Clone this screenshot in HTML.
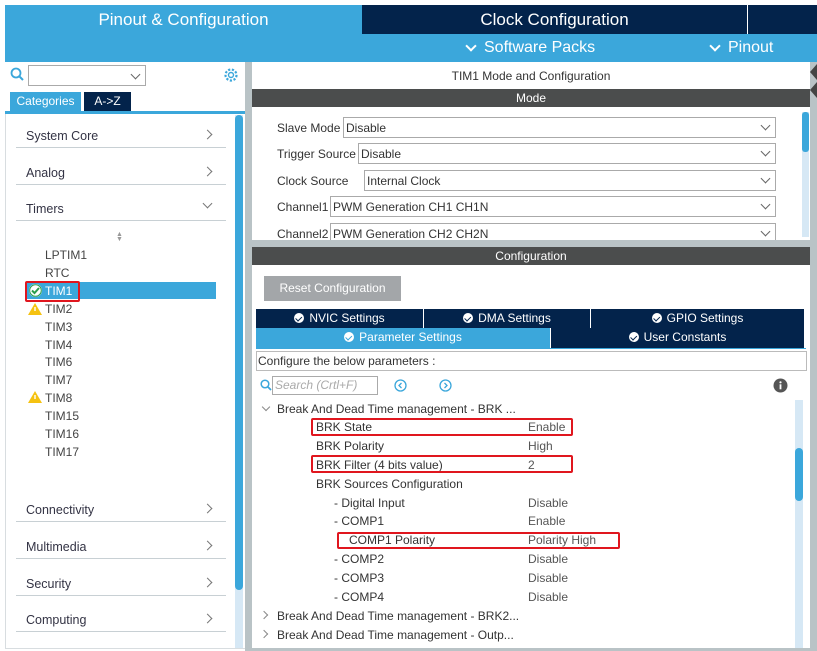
<!DOCTYPE html>
<html><head><meta charset="utf-8"><style>
*{margin:0;padding:0;box-sizing:border-box}
body{width:817px;height:651px;overflow:hidden;background:#fff;font-family:"Liberation Sans",sans-serif;position:relative}
.a{position:absolute}
.t{font-size:12px;color:#333;white-space:nowrap}
.dark{background:#03234b;color:#fff}
.blue{background:#3ba7db;color:#fff}
.sel{border:1px solid #aaa;background:#fff;font-size:12px;color:#333;padding-left:2px;line-height:17px}
.chev{position:absolute;right:6px;top:4px;width:7px;height:7px;border-right:1px solid #666;border-bottom:1px solid #666;transform:rotate(45deg)}
.cat{position:absolute;left:26px;font-size:12.5px;color:#334}
.line{position:absolute;left:16px;width:210px;height:1px;background:#c8d0d4}
.ra{position:absolute;left:204px;width:7px;height:7px;border-right:1px solid #777;border-top:1px solid #777;transform:rotate(45deg)}
.tab{position:absolute;font-size:12px;text-align:center;line-height:19px}
.ck{display:inline-block;width:10px;height:10px;border-radius:50%;background:#fff;vertical-align:-1px;margin-right:5px;position:relative}
.ck:after{content:"";position:absolute;left:3px;top:1.5px;width:2.5px;height:4.5px;border-right:1.5px solid #03234b;border-bottom:1.5px solid #03234b;transform:rotate(45deg)}
.blue .ck:after{border-color:#3ba7db}
.red{position:absolute;border:2px solid #e0161e;border-radius:2px}
.tm{position:absolute;left:45px;font-size:12px;color:#444}
.v{position:absolute;left:528px;font-size:12px;color:#555}
.hc{position:absolute;width:8px;height:8px;border-right:2px solid #fff;border-bottom:2px solid #fff;transform:rotate(45deg)}
.tc{position:absolute;width:6px;height:6px;border-right:1px solid #888;border-bottom:1px solid #888}
</style></head><body>
<div class="a blue" style="left:5px;top:5px;width:357px;height:30px;font-size:17px;text-align:center;line-height:30px">Pinout &amp; Configuration</div>
<div class="a dark" style="left:362px;top:5px;width:385px;height:30px;font-size:17px;text-align:center;line-height:30px">Clock Configuration</div>
<div class="a dark" style="left:748px;top:5px;width:69px;height:30px"></div>
<div class="a blue" style="left:5px;top:34px;width:812px;height:28px;font-size:16px;line-height:28px">
<div class="hc" style="left:462px;top:8px"></div><span class="a" style="left:479px">Software Packs</span>
<div class="hc" style="left:706px;top:8px"></div><span class="a" style="left:723px">Pinout</span></div>
<div class="a" style="left:245px;top:62px;width:7px;height:589px;background:#b9c3c6"></div>
<svg class="a" style="left:10px;top:67px" width="16" height="16"><circle cx="6" cy="6" r="4.5" fill="none" stroke="#3ba7db" stroke-width="1.8"/><line x1="9.5" y1="9.5" x2="13" y2="13" stroke="#3ba7db" stroke-width="2"/></svg>
<div class="a sel" style="left:28px;top:65px;width:118px;height:21px"><div class="chev" style="top:5px"></div></div>
<svg class="a" style="left:223px;top:67px" width="16" height="16"><circle cx="8" cy="8" r="5.5" fill="none" stroke="#3ba7db" stroke-width="2.2" stroke-dasharray="2.2 1.6"/><circle cx="8" cy="8" r="2.5" fill="none" stroke="#3ba7db" stroke-width="1.4"/></svg>
<div class="a blue" style="left:10px;top:92px;width:71px;height:19px;font-size:12px;text-align:center;line-height:19px">Categories</div>
<div class="a dark" style="left:84px;top:92px;width:47px;height:19px;font-size:12px;text-align:center;line-height:19px">A-&gt;Z</div>
<div class="a" style="left:5px;top:111px;width:240px;height:3px;background:#3ba7db"></div>
<div class="a" style="left:5px;top:114px;width:1px;height:535px;background:#d8dde0"></div>
<div class="a" style="left:5px;top:648px;width:240px;height:1px;background:#d8dde0"></div>
<div class="a" style="left:235px;top:115px;width:8px;height:533px;background:#d6e8f5"></div>
<div class="a" style="left:235px;top:115px;width:8px;height:475px;background:#3ba7db;border-radius:4px"></div>
<div class="cat" style="top:129px">System Core</div><div class="ra" style="top:131px"></div><div class="line" style="top:147px"></div>
<div class="cat" style="top:166px">Analog</div><div class="ra" style="top:168px"></div><div class="line" style="top:184px"></div>
<div class="cat" style="top:202px">Timers</div><div class="ra" style="top:200px;transform:rotate(135deg)"></div><div class="line" style="top:220px"></div>
<div class="a" style="left:116px;top:232px;font-size:7px;color:#999;line-height:5px">▲<br>▼</div>
<div class="tm" style="top:248px">LPTIM1</div>
<div class="tm" style="top:266px">RTC</div>
<div class="a" style="left:27px;top:282px;width:189px;height:17px;background:#3ba7db"></div>
<div class="tm" style="top:284px;color:#fff">TIM1</div>
<svg class="a" style="left:28px;top:283px" width="15" height="15"><circle cx="7.5" cy="7.5" r="6.5" fill="#fff"/><circle cx="7.5" cy="7.5" r="5.8" fill="#fff" stroke="#2a9d4a" stroke-width="1"/><path d="M4 7.5l2.5 2.5 4.5-5" fill="none" stroke="#2a9d4a" stroke-width="2"/></svg>
<div class="red" style="left:25px;top:281px;width:55px;height:21px"></div>
<svg class="a" style="left:28px;top:303px" width="14" height="12"><path d="M7 0L14 12H0z" fill="#f5c211"/><rect x="6.3" y="4" width="1.4" height="4" fill="#fff"/></svg>
<div class="tm" style="top:302px">TIM2</div>
<div class="tm" style="top:320px">TIM3</div>
<div class="tm" style="top:338px">TIM4</div>
<div class="tm" style="top:355px">TIM6</div>
<div class="tm" style="top:373px">TIM7</div>
<svg class="a" style="left:28px;top:391px" width="14" height="12"><path d="M7 0L14 12H0z" fill="#f5c211"/><rect x="6.3" y="4" width="1.4" height="4" fill="#fff"/></svg>
<div class="tm" style="top:391px">TIM8</div>
<div class="tm" style="top:409px">TIM15</div>
<div class="tm" style="top:427px">TIM16</div>
<div class="tm" style="top:445px">TIM17</div>
<div class="cat" style="top:503px">Connectivity</div><div class="ra" style="top:505px"></div><div class="line" style="top:521px"></div>
<div class="cat" style="top:540px">Multimedia</div><div class="ra" style="top:542px"></div><div class="line" style="top:558px"></div>
<div class="cat" style="top:577px">Security</div><div class="ra" style="top:579px"></div><div class="line" style="top:595px"></div>
<div class="cat" style="top:613px">Computing</div><div class="ra" style="top:615px"></div><div class="line" style="top:631px"></div>
<div class="a" style="left:810px;top:62px;width:7px;height:589px;background:#b9c3c6"></div>
<svg class="a" style="left:810px;top:64px" width="7" height="40"><path d="M7 0L0 8 7 16z M7 18L0 26 7 34z" fill="#444"/></svg>
<div class="a t" style="left:252px;top:69px;width:558px;text-align:center">TIM1 Mode and Configuration</div>
<div class="a" style="left:252px;top:89px;width:558px;height:18px;background:#4b4d4d;color:#fff;font-size:12px;text-align:center;line-height:18px">Mode</div>
<div class="a" style="left:802px;top:112px;width:7px;height:125px;background:#d6e8f5"></div>
<div class="a" style="left:802px;top:112px;width:7px;height:40px;background:#3ba7db;border-radius:3px"></div>
<div class="a t" style="left:277px;top:121px">Slave Mode</div><div class="a sel" style="left:343px;top:117px;width:433px;height:21px;line-height:20px">Disable<div class="chev"></div></div>
<div class="a t" style="left:277px;top:147px">Trigger Source</div><div class="a sel" style="left:358px;top:143px;width:418px;height:21px;line-height:20px">Disable<div class="chev"></div></div>
<div class="a t" style="left:277px;top:174px">Clock Source</div><div class="a sel" style="left:364px;top:170px;width:412px;height:21px;line-height:20px">Internal Clock<div class="chev"></div></div>
<div class="a t" style="left:277px;top:200px">Channel1</div><div class="a sel" style="left:330px;top:196px;width:446px;height:21px;line-height:20px">PWM Generation CH1 CH1N<div class="chev"></div></div>
<div class="a t" style="left:277px;top:227px">Channel2</div><div class="a sel" style="left:330px;top:223px;width:446px;height:18px;line-height:20px;border-bottom:none">PWM Generation CH2 CH2N<div class="chev"></div></div>
<div class="a" style="left:252px;top:240px;width:558px;height:7px;background:#b9c3c6"></div>
<div class="a" style="left:252px;top:247px;width:558px;height:18px;background:#4b4d4d;color:#fff;font-size:12px;text-align:center;line-height:18px">Configuration</div>
<div class="a" style="left:264px;top:276px;width:137px;height:25px;background:#a3a6a9;color:#fff;font-size:12px;text-align:center;line-height:25px">Reset Configuration</div>
<div class="tab dark" style="left:256px;top:309px;width:167px"><span class="ck"></span>NVIC Settings</div>
<div class="tab dark" style="left:424px;top:309px;width:166px"><span class="ck"></span>DMA Settings</div>
<div class="tab dark" style="left:591px;top:309px;width:213px"><span class="ck"></span>GPIO Settings</div>
<div class="tab blue" style="left:256px;top:328px;width:294px;height:20px"><span class="ck"></span>Parameter Settings</div>
<div class="tab dark" style="left:551px;top:328px;width:253px;height:20px"><span class="ck"></span>User Constants</div>
<div class="a" style="left:256px;top:348px;width:550px;height:1px;background:#3ba7db"></div>
<div class="a t" style="left:256px;top:351px;width:551px;height:20px;border:1px solid #bbb;line-height:18px;padding-left:1px">Configure the below parameters :</div>
<svg class="a" style="left:260px;top:379px" width="13" height="13"><circle cx="5" cy="5" r="3.8" fill="none" stroke="#3ba7db" stroke-width="1.5"/><line x1="8" y1="8" x2="11" y2="11" stroke="#3ba7db" stroke-width="1.8"/></svg>
<div class="a" style="left:272px;top:376px;width:106px;height:19px;border:1px solid #aaa;font-size:12px;color:#aaa;font-style:italic;line-height:17px;padding-left:2px">Search (Crtl+F)</div>
<svg class="a" style="left:394px;top:379px" width="13" height="13"><circle cx="6.5" cy="6.5" r="5.5" fill="none" stroke="#3ba7db" stroke-width="1.3"/><path d="M7.5 4L5 6.5 7.5 9" fill="none" stroke="#3ba7db" stroke-width="1.3"/></svg>
<svg class="a" style="left:439px;top:379px" width="13" height="13"><circle cx="6.5" cy="6.5" r="5.5" fill="none" stroke="#3ba7db" stroke-width="1.3"/><path d="M5.5 4L8 6.5 5.5 9" fill="none" stroke="#3ba7db" stroke-width="1.3"/></svg>
<svg class="a" style="left:773px;top:378px" width="15" height="15"><circle cx="7.5" cy="7.5" r="7" fill="#555"/><rect x="6.6" y="6.3" width="1.8" height="5" fill="#fff"/><circle cx="7.5" cy="4.3" r="1.1" fill="#fff"/></svg>
<div class="a" style="left:795px;top:400px;width:8px;height:248px;background:#d6e8f5"></div>
<div class="a" style="left:795px;top:448px;width:8px;height:53px;background:#3ba7db;border-radius:4px"></div>
<div class="tc" style="left:263px;top:404px;transform:rotate(45deg)"></div>
<div class="a t" style="left:277px;top:402px">Break And Dead Time management - BRK ...</div>
<div class="a t" style="left:316px;top:420px">BRK State</div><div class="v" style="top:420px">Enable</div>
<div class="red" style="left:311px;top:418px;width:262px;height:18px"></div>
<div class="a t" style="left:316px;top:439px">BRK Polarity</div><div class="v" style="top:439px">High</div>
<div class="a t" style="left:316px;top:458px">BRK Filter (4 bits value)</div><div class="v" style="top:458px">2</div>
<div class="red" style="left:311px;top:455px;width:262px;height:18px"></div>
<div class="a t" style="left:316px;top:477px">BRK Sources Configuration</div>
<div class="a t" style="left:334px;top:496px">- Digital Input</div><div class="v" style="top:496px">Disable</div>
<div class="a t" style="left:334px;top:514px">- COMP1</div><div class="v" style="top:514px">Enable</div>
<div class="a t" style="left:349px;top:533px">COMP1 Polarity</div><div class="v" style="top:533px">Polarity High</div>
<div class="red" style="left:337px;top:532px;width:283px;height:17px"></div>
<div class="a t" style="left:334px;top:552px">- COMP2</div><div class="v" style="top:552px">Disable</div>
<div class="a t" style="left:334px;top:571px">- COMP3</div><div class="v" style="top:571px">Disable</div>
<div class="a t" style="left:334px;top:590px">- COMP4</div><div class="v" style="top:590px">Disable</div>
<div class="tc" style="left:261px;top:612px;transform:rotate(-45deg)"></div>
<div class="a t" style="left:277px;top:609px">Break And Dead Time management - BRK2...</div>
<div class="tc" style="left:261px;top:631px;transform:rotate(-45deg)"></div>
<div class="a t" style="left:277px;top:628px">Break And Dead Time management - Outp...</div>
<div class="a" style="left:252px;top:648px;width:558px;height:3px;background:#b9c3c6"></div>
</body></html>
